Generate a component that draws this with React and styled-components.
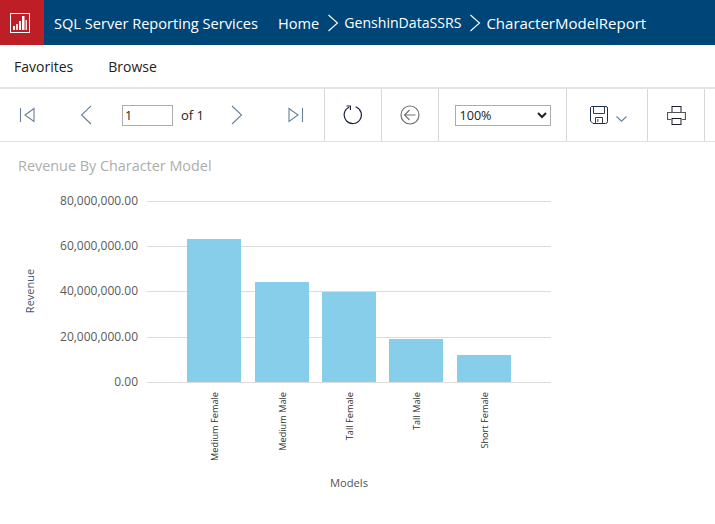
import React from 'react'
import styled, { createGlobalStyle } from 'styled-components'

const GlobalStyle = createGlobalStyle`
  html, body {
    margin: 0;
    padding: 0;
    background: #fff;
    font-family: "Open Sans", "Noto Sans", "Liberation Sans", sans-serif;
  }
`

const Page = styled.div`
  width: 715px;
  height: 524px;
  overflow: hidden;
`

const Header = styled.header`
  height: 45px;
  display: flex;
  align-items: center;
  background: #004578;
  color: #fff;
`

const LogoBox = styled.div`
  width: 44px;
  height: 45px;
  box-sizing: border-box;
  padding-left: 10px;
  display: flex;
  align-items: center;
  background: #be1e26;
`

const AppName = styled.span`
  margin-left: 10px;
  width: 224px;
  font-size: 14.6px;
  white-space: nowrap;
`

const Crumb = styled.span`
  font-size: ${(p) => p.$size || 14.6}px;
  white-space: nowrap;
`

const CrumbSep = styled.svg`
  width: 12px;
  height: 18px;
  margin: 0 5px 0 8px;
  flex: none;
`

const Nav = styled.nav`
  height: 42px;
  display: flex;
  align-items: center;
  gap: 35px;
  padding-left: 14px;
  font-size: 14px;
  color: #222;
`

const Toolbar = styled.div`
  height: 52px;
  display: flex;
  border-top: 2px solid #e4e4e4;
  border-bottom: 1px solid #e0e0e0;
`

const Group = styled.div`
  width: ${(p) => p.$width}px;
  box-sizing: border-box;
  flex: none;
  display: flex;
  align-items: center;
  justify-content: ${(p) => p.$justify || 'center'};
  border-right: 1px solid #d8d8d8;
`

const IconCell = styled.div`
  width: ${(p) => p.$width}px;
  flex: none;
  display: flex;
  align-items: center;
  justify-content: center;
`

const PageInput = styled.input`
  width: 51px;
  height: 21px;
  box-sizing: border-box;
  margin-left: 4px;
  padding: 0 2px;
  border: 1px solid #adadad;
  border-radius: 0;
  outline: none;
  font-family: inherit;
  font-size: 12.5px;
  color: #222;
`

const PageCount = styled.span`
  margin-left: 8px;
  width: 24px;
  font-size: 13px;
  color: #222;
  white-space: nowrap;
`

const ZoomSelect = styled.select`
  width: 96px;
  height: 21px;
  box-sizing: border-box;
  border: 1px solid #adadad;
  border-radius: 0;
  background: #fff;
  outline: none;
  font-family: inherit;
  font-size: 12.6px;
  color: #222;
`

const ReportTitle = styled.h2`
  margin: 14px 0 0 18px;
  font-size: 14.4px;
  line-height: 20px;
  font-weight: 400;
  color: #adadad;
`

const ChartSvg = styled.svg`
  display: block;
  width: 715px;
  height: 350px;
  font-family: "Open Sans", "Noto Sans", sans-serif;
`

const data = [
  { name: 'Medium Female', x: 187, top: 239 },
  { name: 'Medium Male', x: 255, top: 282 },
  { name: 'Tall Female', x: 322, top: 292 },
  { name: 'Tall Male', x: 389, top: 339 },
  { name: 'Short Female', x: 457, top: 355 },
]

const ticks = [
  { label: '80,000,000.00', y: 201 },
  { label: '60,000,000.00', y: 246 },
  { label: '40,000,000.00', y: 291 },
  { label: '20,000,000.00', y: 337 },
  { label: '0.00', y: 382 },
]

// svg sits 176px below the page top, chart coordinates are page coordinates
const OFFSET = 176

const Chart = () => (
  <ChartSvg viewBox={`0 ${OFFSET} 715 350`}>
    {ticks.map((t) => (
      <g key={t.label}>
        <line x1="147" x2="551" y1={t.y + 0.5} y2={t.y + 0.5} stroke="#dcdcdc" />
        <text x="138" y={t.y + 4} textAnchor="end" fontSize="12" fill="#5a5a5a">{t.label}</text>
      </g>
    ))}
    {data.map((d) => (
      <g key={d.name}>
        <rect x={d.x} y={d.top} width="54" height={382 - d.top} fill="#87ceeb" />
        <text
          transform={`translate(${d.x + 31} 392) rotate(-90)`}
          textAnchor="end"
          fontSize="9.2"
          fill="#333"
        >
          {d.name}
        </text>
      </g>
    ))}
    <text transform="translate(34 291) rotate(-90)" textAnchor="middle" fontSize="11" fill="#44546a">Revenue</text>
    <text x="349" y="487" textAnchor="middle" fontSize="11.2" fill="#555">Models</text>
  </ChartSvg>
)

const Logo = () => (
  <svg width="20" height="20" viewBox="0 0 20 20">
    <rect x="0.5" y="0.5" width="19" height="19" fill="none" stroke="#fff" />
    <rect x="3" y="13" width="2" height="4" fill="#fff" />
    <rect x="6" y="11" width="2" height="6" fill="#f6dcdc" />
    <rect x="9" y="8" width="2" height="9" fill="#fff" />
    <rect x="12" y="3" width="2.5" height="14" fill="#fff" />
    <rect x="15.5" y="7" width="1.5" height="10" fill="#f6dcdc" />
  </svg>
)

const Chevron = () => (
  <CrumbSep viewBox="0 0 12 18">
    <path d="M1.5 1 L10.5 9 L1.5 17" fill="none" stroke="#fff" strokeWidth="1.1" />
  </CrumbSep>
)

const stroke = { fill: 'none', stroke: '#67809a', strokeWidth: 1.1 }

const FirstIcon = () => (
  <svg width="16" height="16" viewBox="0 0 16 16">
    <path d="M1.5 1 V15" {...stroke} />
    <path d="M15 1.5 L6 8 L15 14.5 Z" {...stroke} />
  </svg>
)

const LastIcon = () => (
  <svg width="16" height="16" viewBox="0 0 16 16">
    <path d="M14.5 1 V15" {...stroke} />
    <path d="M1 1.5 L10 8 L1 14.5 Z" {...stroke} />
  </svg>
)

const PrevIcon = () => (
  <svg width="12" height="20" viewBox="0 0 12 20">
    <path d="M11 1 L1.5 10 L11 19" {...stroke} />
  </svg>
)

const NextIcon = () => (
  <svg width="12" height="20" viewBox="0 0 12 20">
    <path d="M1 1 L10.5 10 L1 19" {...stroke} />
  </svg>
)

const RefreshIcon = () => (
  <svg width="20" height="20" viewBox="0 0 20 20">
    <path d="M6 2.2 A8.6 8.6 0 1 0 12.6 1.8" fill="none" stroke="#1b2440" strokeWidth="1.2" />
    <path d="M3.5 1 H7.4 V5" fill="none" stroke="#1b2440" strokeWidth="1.2" />
  </svg>
)

const BackIcon = () => (
  <svg width="20" height="20" viewBox="0 0 20 20">
    <circle cx="10" cy="10" r="9" fill="none" stroke="#737373" strokeWidth="1.2" />
    <path d="M15.5 10 H4.5 M9.5 5 L4.5 10 L9.5 15" fill="none" stroke="#737373" strokeWidth="1.1" />
  </svg>
)

const SaveIcon = () => (
  <svg width="18" height="18" viewBox="0 0 18 18" style={{ marginLeft: 2 }}>
    <path d="M1.5 0.5 H16 Q17.5 0.5 17.5 2 V15.5 Q17.5 17.5 15.5 17.5 H3 L0.5 15 V1.5 Z" fill="none" stroke="#1d2b44" />
    <path d="M3.5 0.5 V7.5 H14.5 V0.5" fill="none" stroke="#3a3a44" />
    <path d="M5.5 17.5 V11.5 H12.5 V17.5" fill="none" stroke="#3a3a44" />
    <rect x="7" y="13" width="1.5" height="3" fill="#5b8fb0" />
  </svg>
)

const ArrowDown = () => (
  <svg width="11" height="6" viewBox="0 0 11 6" style={{ marginLeft: 8, marginTop: 8 }}>
    <path d="M0.5 0.5 L5.5 5.2 L10.5 0.5" {...stroke} />
  </svg>
)

const PrintIcon = () => (
  <svg width="19" height="19" viewBox="0 0 19 19">
    <rect x="5" y="0.5" width="9" height="6" fill="none" stroke="#1b1b2a" />
    <path d="M4 13.5 H0.5 V6.5 H18.5 V13.5 H15" fill="none" stroke="#555" strokeWidth="1.2" />
    <rect x="5" y="12.5" width="9" height="6" fill="#fff" stroke="#1b1b2a" />
  </svg>
)

const App = () => (
  <Page>
    <GlobalStyle />
    <Header>
      <LogoBox><Logo /></LogoBox>
      <AppName>SQL Server Reporting Services</AppName>
      <Crumb>Home</Crumb>
      <Chevron />
      <Crumb $size={14.1}>GenshinDataSSRS</Crumb>
      <Chevron />
      <Crumb $size={15}>CharacterModelReport</Crumb>
    </Header>
    <Nav>
      <span>Favorites</span>
      <span>Browse</span>
    </Nav>
    <Toolbar>
      <Group $width={325} $justify="flex-start">
        <IconCell $width={54}><FirstIcon /></IconCell>
        <IconCell $width={64}><PrevIcon /></IconCell>
        <PageInput defaultValue="1" />
        <PageCount>of 1</PageCount>
        <IconCell $width={64}><NextIcon /></IconCell>
        <IconCell $width={54}><LastIcon /></IconCell>
      </Group>
      <Group $width={57}><RefreshIcon /></Group>
      <Group $width={57}><BackIcon /></Group>
      <Group $width={128}>
        <ZoomSelect defaultValue="100%">
          <option>100%</option>
          <option>75%</option>
          <option>50%</option>
        </ZoomSelect>
      </Group>
      <Group $width={81}><SaveIcon /><ArrowDown /></Group>
      <Group $width={57}><PrintIcon /></Group>
    </Toolbar>
    <ReportTitle>Revenue By Character Model</ReportTitle>
    <Chart />
  </Page>
)

export default App
